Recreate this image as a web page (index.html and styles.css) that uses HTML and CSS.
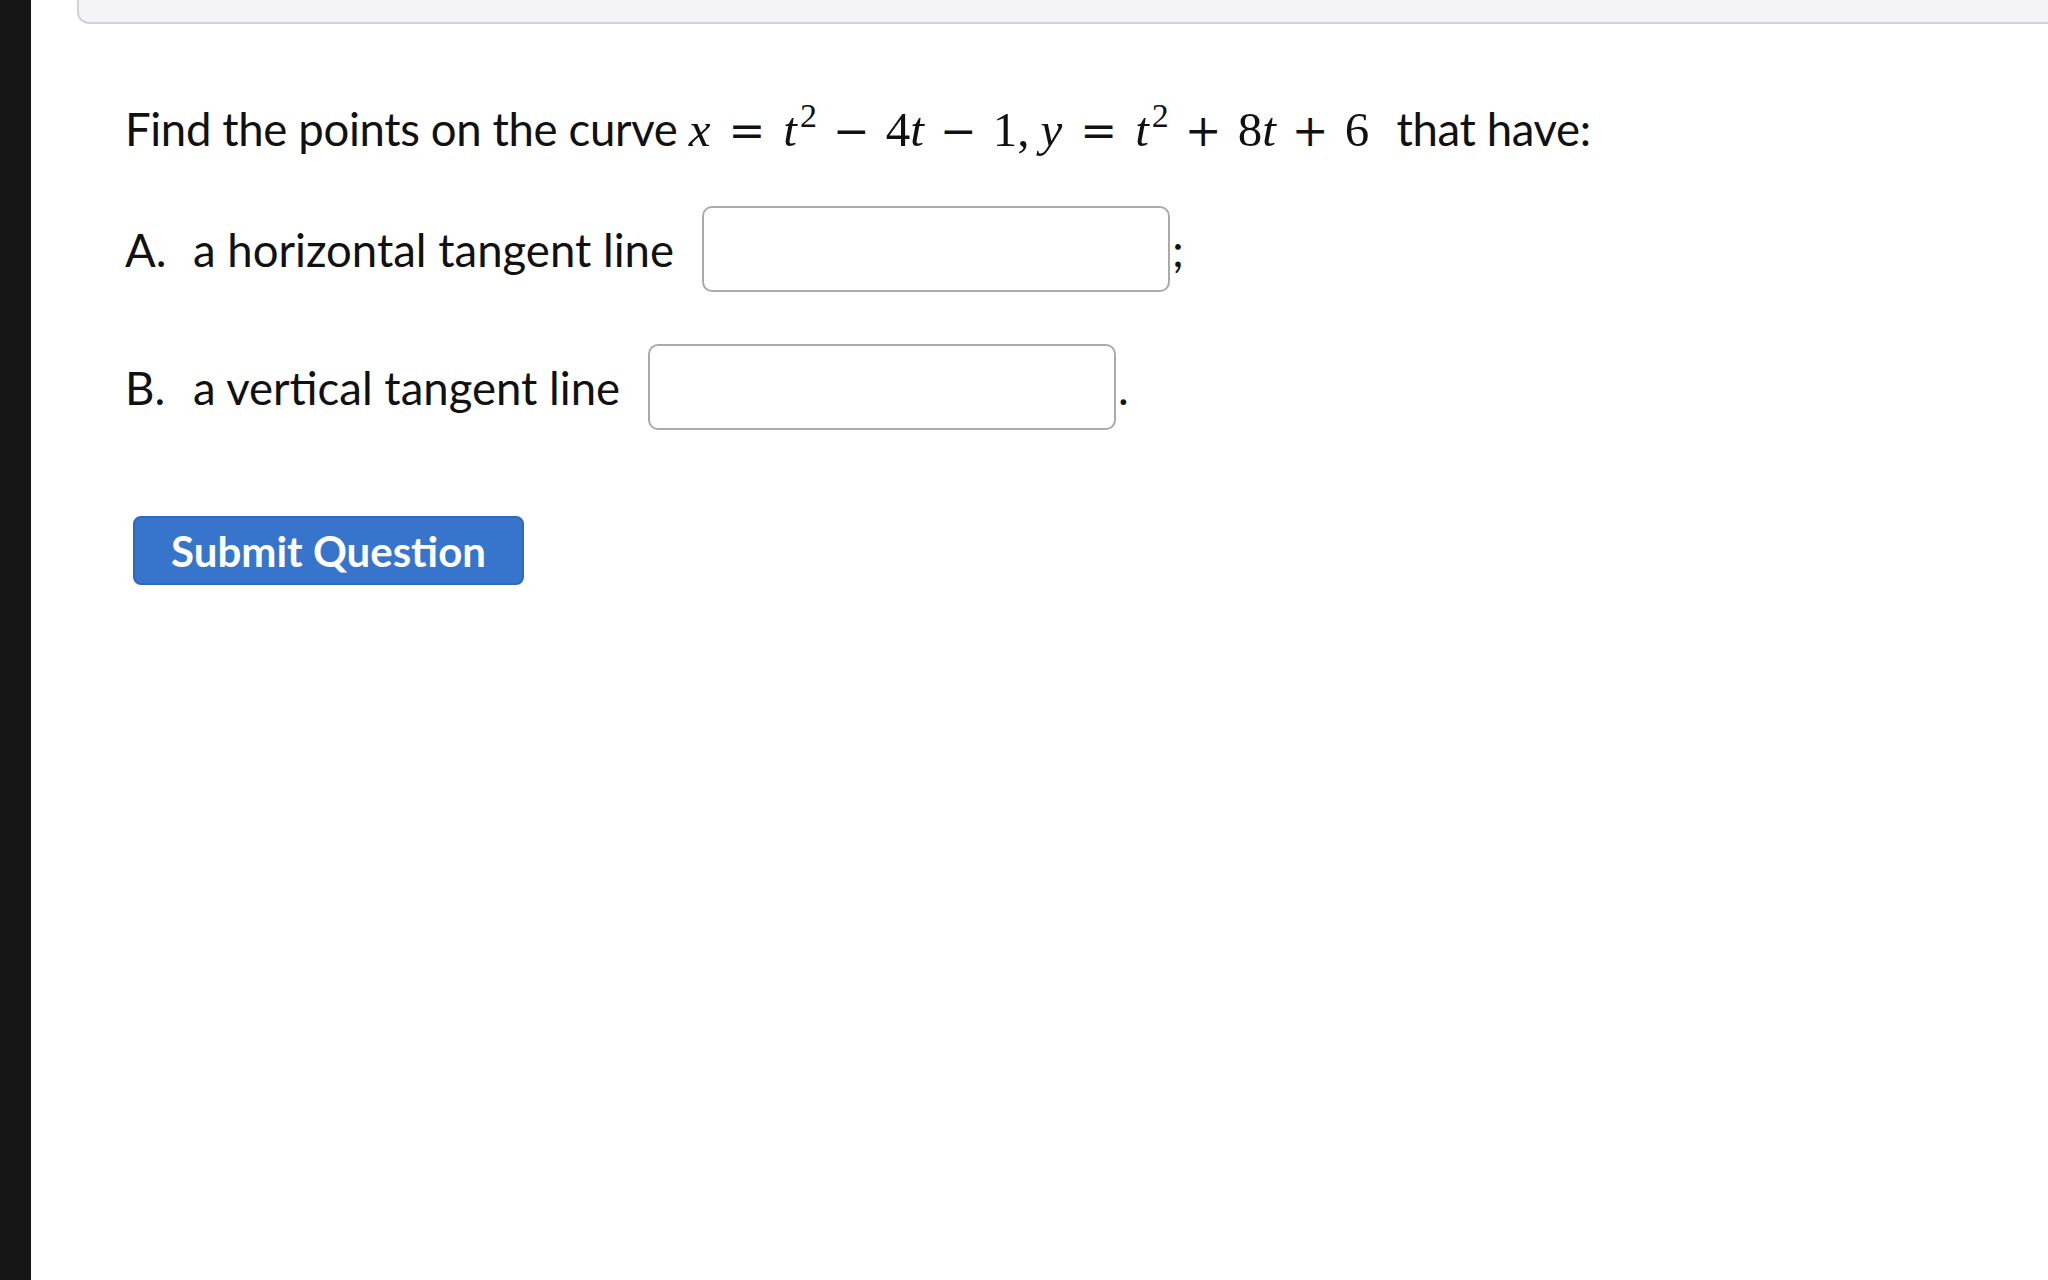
FILE: index.html
```html
<!DOCTYPE html>
<html lang="en">
<head>
    <meta charset="UTF-8">
    <meta name="viewport" content="width=device-width, initial-scale=1.0">
    <title>Question</title>
    <link rel="stylesheet" href="styles.css">
</head>
<body>
    <div class="sidebar"></div>
    <div class="main">
        <div class="topbar"></div>
        <div class="question">
            <p class="intro">
                Find the points on the curve
                <span class="math"><i>x</i><span class="rel">=</span><i>t</i><sup>2</sup><span class="bin">&minus;</span>4<i>t</i><span class="bin">&minus;</span>1<span class="comma">,</span><i>y</i><span class="rel">=</span><i>t</i><sup>2</sup><span class="bin">+</span>8<i>t</i><span class="bin">+</span>6</span>
                that have:
            </p>
            <div class="part part-a">
                <span class="letter">A.</span>
                <span class="label">a horizontal tangent line</span>
                <input type="text" class="answer">
                <span class="punct">;</span>
            </div>
            <div class="part part-b">
                <span class="letter">B.</span>
                <span class="label">a vertical tangent line</span>
                <input type="text" class="answer">
                <span class="punct">.</span>
            </div>
            <button class="submit">Submit Question</button>
        </div>
    </div>
</body>
</html>
```

FILE: styles.css
```css
* {
    margin: 0;
    padding: 0;
    box-sizing: border-box;
}
body {
    display: flex;
    min-height: 100vh;
    background-color: #ffffff;
    font-family: Lato, "Open Sans", sans-serif;
    color: #111111;
    overflow: hidden;
}
.sidebar {
    width: 31px;
    flex-shrink: 0;
    background-color: #161616;
}
.main {
    flex: 1;
    min-width: 0;
}
.topbar {
    height: 24px;
    margin-left: 46px;
    margin-right: -20px;
    background-color: #f3f3f8;
    border-left: 2px solid #d2d2d6;
    border-bottom: 2px solid #d2d2d6;
    border-bottom-left-radius: 12px;
}
.question {
    padding-left: 94px;
    font-size: 45.5px;
}
.intro {
    margin-top: 75px;
    line-height: 60px;
    white-space: nowrap;
    letter-spacing: -0.35px;
}
.math {
    font-family: "Liberation Serif", "DejaVu Serif", serif;
    font-size: 49px;
    letter-spacing: normal;
    margin: 0 16px 0 0;
}
.math i {
    font-style: italic;
}
.math sup {
    font-size: 34px;
    vertical-align: 19px;
    line-height: 0;
    margin-left: 3px;
}
.math .rel,
.math .bin {
    font-family: "DejaVu Serif", serif;
    font-size: 44px;
    font-weight: 300;
}
.math .rel {
    margin: 0 18px;
}
.math .bin {
    margin: 0 16px;
}
.math .comma {
    margin-right: 11px;
}
.part {
    display: flex;
    align-items: center;
    height: 86px;
}
.part-a {
    margin-top: 45px;
}
.part-b {
    margin-top: 52px;
}
.letter {
    width: 68px;
}
.label {
    margin-right: 28px;
}
.answer {
    width: 468px;
    height: 86px;
    border: 2px solid #aaaaaa;
    border-radius: 10px;
    background: #ffffff;
    font-size: 40px;
    padding: 0 16px;
}
.punct {
    margin-left: 2px;
}
.submit {
    display: block;
    margin-top: 86px;
    margin-left: 8px;
    width: 391px;
    height: 69px;
    background-color: #3774cc;
    border: 2px solid #2f68bf;
    border-radius: 8px;
    color: #ffffff;
    font-family: Lato, "Open Sans", sans-serif;
    font-size: 42px;
    font-weight: bold;
    cursor: pointer;
}
```
